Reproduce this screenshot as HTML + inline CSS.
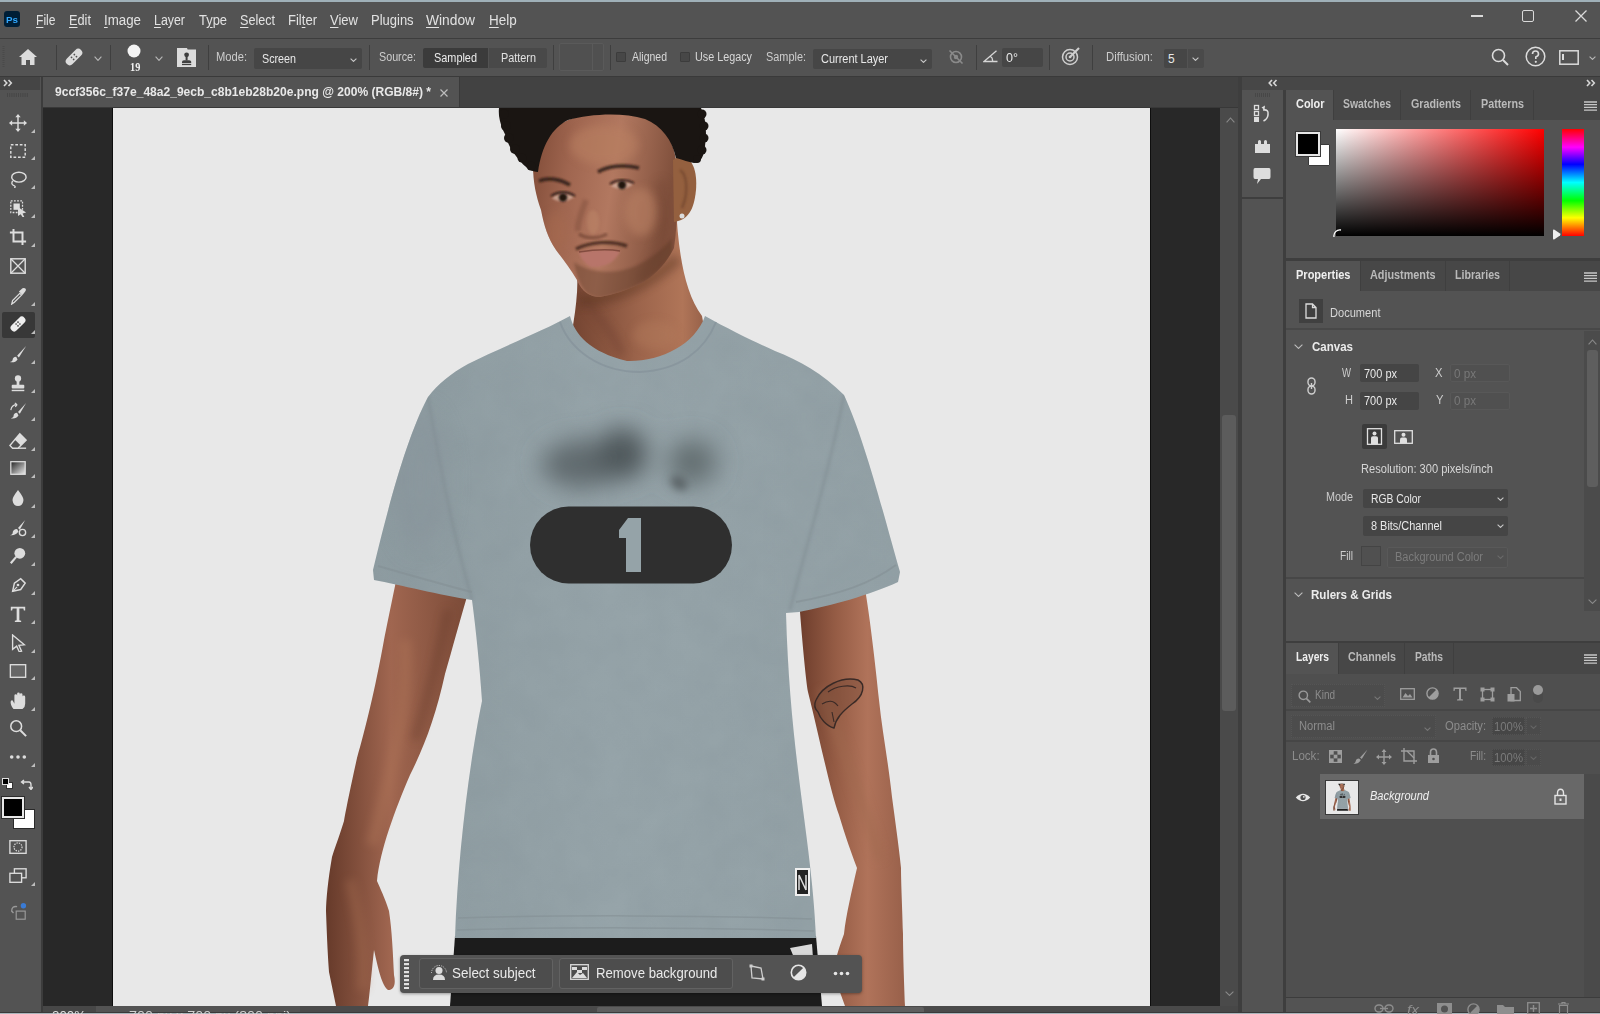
<!DOCTYPE html>
<html><head><meta charset="utf-8">
<style>
*{margin:0;padding:0;box-sizing:border-box}
html,body{width:1600px;height:1014px;overflow:hidden;background:#535353;font-family:"Liberation Sans",sans-serif;color:#e0e0e0}
.a{position:absolute}
.t{position:absolute;white-space:nowrap;line-height:1}
u{text-decoration:underline;text-underline-offset:2px;text-decoration-thickness:1px}
</style></head><body>
<div class="a" style="left:0px;top:0px;width:1600px;height:2px;background:#9fb0b8;"></div>
<div class="a" style="left:0px;top:2px;width:1600px;height:36px;background:#535353;"></div>
<div class="a" style="left:0px;top:38px;width:1600px;height:1px;background:#3d3d3d;"></div>
<div class="a" style="left:0px;top:39px;width:1600px;height:37px;background:#535353;"></div>
<div class="a" style="left:0px;top:76px;width:1600px;height:1px;background:#3a3a3a;"></div>
<div class="a" style="left:0px;top:77px;width:41px;height:929px;background:#535353;"></div>
<div class="a" style="left:0px;top:77px;width:40px;height:13px;background:#454545;"></div>
<div class="a" style="left:41px;top:77px;width:2px;height:937px;background:#3c3c3c;"></div>
<div class="a" style="left:43px;top:77px;width:1195px;height:31px;background:#424242;"></div>
<div class="a" style="left:43px;top:77px;width:416px;height:30px;background:#535353;"></div>
<div class="a" style="left:459px;top:77px;width:1px;height:30px;background:#3a3a3a;"></div>
<div class="a" style="left:43px;top:107px;width:1195px;height:1px;background:#383838;"></div>
<div class="a" style="left:43px;top:108px;width:1177px;height:898px;background:#282828;"></div>
<div class="a" style="left:112px;top:108px;width:1px;height:898px;background:#0e0e0e;"></div>
<div class="a" style="left:1150px;top:108px;width:1px;height:898px;background:#0e0e0e;"></div>
<div class="a" style="left:113px;top:108px;width:1037px;height:898px;background:#e8e8e8;"></div>
<svg class="a" style="left:113px;top:108px" width="1037" height="898" viewBox="113 108 1037 898">
<defs>
<filter id="bl12" filterUnits="userSpaceOnUse" x="113" y="108" width="1037" height="898"><feGaussianBlur stdDeviation="12"/></filter>
<filter id="bl4" filterUnits="userSpaceOnUse" x="113" y="108" width="1037" height="898"><feGaussianBlur stdDeviation="4"/></filter>
<filter id="bl2" x="-50%" y="-50%" width="200%" height="200%"><feGaussianBlur stdDeviation="1.5"/></filter>
<filter id="bl1" x="-50%" y="-50%" width="200%" height="200%"><feGaussianBlur stdDeviation="0.8"/></filter>
<linearGradient id="armL" x1="0" y1="0" x2="1" y2="0"><stop offset="0" stop-color="#663a2a"/><stop offset="0.45" stop-color="#a06650"/><stop offset="1" stop-color="#7a4a37"/></linearGradient>
<linearGradient id="armR" x1="0" y1="0" x2="1" y2="0"><stop offset="0" stop-color="#6c3c2b"/><stop offset="0.35" stop-color="#955c45"/><stop offset="0.65" stop-color="#b0735a"/><stop offset="1" stop-color="#98604a"/></linearGradient>
<linearGradient id="skinF" x1="0" y1="0" x2="1" y2="0.2"><stop offset="0" stop-color="#7e4a36"/><stop offset="0.3" stop-color="#a06650"/><stop offset="0.6" stop-color="#b27860"/><stop offset="1" stop-color="#80503c"/></linearGradient>
<linearGradient id="neckG" x1="0" y1="0" x2="1" y2="0"><stop offset="0" stop-color="#70412f"/><stop offset="0.5" stop-color="#9c644b"/><stop offset="0.8" stop-color="#b07558"/><stop offset="1" stop-color="#8e5a44"/></linearGradient>
<linearGradient id="shirtG" x1="0" y1="0" x2="1" y2="0"><stop offset="0" stop-color="#8e9ca1"/><stop offset="0.45" stop-color="#97a5aa"/><stop offset="1" stop-color="#94a2a7"/></linearGradient>
<clipPath id="faceclip"><path d="M533,165 C536,132 565,113 612,112 C652,112 672,130 676,160 C678,190 678,222 674,248 C666,264 654,276 642,283 C628,290 612,295 600,297 C590,297 582,292 577,280 C570,268 562,258 556,250 C548,238 544,226 541,210 C536,196 533,182 533,165 Z"/></clipPath>
<clipPath id="shirtclip"><path d="M570,316 C575,335 590,352 627,361 C660,362 695,345 705,316 C730,330 755,342 775,351 C800,361 822,373 844,395 C865,440 885,520 900,572 L898,582 C870,595 830,606 799,612 L786,613 C790,760 812,840 816,938 L455,938 C458,850 470,760 482,701 C480,670 476,630 472,600 C440,595 400,585 374,580 L373,570 C385,520 405,440 428,397 C438,384 450,374 468,364 C500,348 545,330 570,316 Z"/></clipPath>
<filter id="noise" x="0" y="0" width="100%" height="100%"><feTurbulence type="fractalNoise" baseFrequency="0.03" numOctaves="3" seed="3"/><feColorMatrix type="matrix" values="0 0 0 0 0.2  0 0 0 0 0.25  0 0 0 0 0.28  0 0 0 -1.2 1.1"/></filter>
<clipPath id="neckclip"><path d="M574,255 L676,205 C678,250 684,292 702,316 L712,372 L565,372 C572,330 579,300 577,272 Z"/></clipPath>
</defs>
<g id="fig">
<!-- left arm -->
<path d="M398,570 L395,586 C390,610 386,630 384,640 C375,690 365,730 357,758 C350,790 347,805 344,821 C338,840 334,850 332,857 C328,880 326,900 326,911 C327,940 328,960 329,972 L336,1006 L368,1006 C370,990 372,968 374,950 C378,968 382,986 388,990 C394,990 396,984 394,975 C393,955 392,930 389,911 C385,898 380,888 377,881 C380,850 395,810 410,775 C425,745 436,715 445,674 C452,650 460,620 466,600 L470,580 Z" fill="url(#armL)"/>
<path d="M405,640 C410,700 395,760 372,845" stroke="#ad7356" stroke-width="12" fill="none" opacity="0.45" filter="url(#bl4)"/>
<path d="M350,880 C360,920 365,950 362,990" stroke="#a46c50" stroke-width="10" fill="none" opacity="0.4" filter="url(#bl4)"/>
<path d="M448,610 C440,650 430,690 415,740" stroke="#5e3626" stroke-width="8" fill="none" opacity="0.35" filter="url(#bl4)"/>
<!-- right arm -->
<path d="M798,590 L800,612 C803,650 806,680 808,692 C820,740 830,790 839,815 C845,835 852,855 857,868 C852,890 846,915 844,934 C838,950 834,965 833,973 L845,1006 L905,1006 C904,980 903,950 903,934 C902,900 901,880 901,868 C898,840 895,820 892,797 C888,760 882,730 879,700 C875,660 870,620 866,595 L864,575 Z" fill="url(#armR)"/>
<path d="M822,690 C835,730 860,790 880,860" stroke="#a06a50" stroke-width="10" fill="none" opacity="0.5" filter="url(#bl4)"/>
<!-- tattoo -->
<path d="M816,700 C822,686 842,676 858,680 C866,684 864,696 852,704 C842,712 836,718 834,728 C826,726 820,718 818,712 C814,708 814,704 816,700 Z" fill="#6a4232" fill-opacity="0.35" stroke="#3a2a26" stroke-width="1.4"/>
<path d="M828,692 C836,686 850,684 856,688 M822,704 C828,700 834,700 838,706 M832,712 L834,722" stroke="#3a2a26" stroke-width="1.1" fill="none"/>
<!-- pants -->
<path d="M455,936 L816,936 L822,1006 L450,1006 Z" fill="#1c1c1c"/>
<path d="M790,948 L812,944 L813,958 L795,960 Z" fill="#d8d8d8"/>
<!-- neck -->
<path d="M574,255 L676,205 C678,250 684,292 702,316 L712,372 L565,372 C572,330 579,300 577,272 Z" fill="url(#neckG)"/>
<g clip-path="url(#neckclip)">
<path d="M585,300 C600,320 615,335 622,355" stroke="#6e4030" stroke-width="8" fill="none" opacity="0.45" filter="url(#bl4)"/>
<ellipse cx="655" cy="335" rx="22" ry="14" fill="#b27a5c" opacity="0.45" filter="url(#bl4)"/>
<path d="M578,300 C610,302 650,285 678,258" stroke="#5a3424" stroke-width="12" fill="none" opacity="0.45" filter="url(#bl4)"/>
</g>
<!-- face -->
<path d="M533,165 C536,132 565,113 612,112 C652,112 672,130 676,160 C678,190 678,222 674,248 C666,264 654,276 642,283 C628,290 612,295 600,297 C590,297 582,292 577,280 C570,268 562,258 556,250 C548,238 544,226 541,210 C536,196 533,182 533,165 Z" fill="url(#skinF)"/>
<g clip-path="url(#faceclip)">
<ellipse cx="604" cy="145" rx="34" ry="20" fill="#b98062" opacity="0.6" filter="url(#bl4)"/>
<ellipse cx="641" cy="212" rx="16" ry="24" fill="#bd8466" opacity="0.55" filter="url(#bl4)"/>
<ellipse cx="556" cy="232" rx="12" ry="20" fill="#a66b4f" opacity="0.5" filter="url(#bl4)"/>
<path d="M660,180 C668,215 664,250 640,280" stroke="#6e4232" stroke-width="9" fill="none" opacity="0.35" filter="url(#bl4)"/>
<!-- beard / chin shadow -->
<path d="M574,262 C588,272 612,276 636,266 C652,258 664,248 672,238 L672,254 C660,272 640,290 600,298 C586,298 578,286 574,262 Z" fill="#553424" opacity="0.38" filter="url(#bl2)"/>
<!-- eyebrows -->
<path d="M539,181 C548,177 560,179 570,185" stroke="#2a1a14" stroke-width="3.5" fill="none" opacity="0.85" filter="url(#bl1)"/>
<path d="M598,172 C608,166 624,164 639,168" stroke="#2a1a14" stroke-width="3.5" fill="none" opacity="0.85" filter="url(#bl1)"/>
<!-- eyes -->
<path d="M552,198 C557,192 568,192 574,197 C568,202 558,203 552,198 Z" fill="#d9b8a8" opacity="0.7" filter="url(#bl1)"/>
<circle cx="563" cy="197.5" r="4.2" fill="#201410" filter="url(#bl1)"/>
<path d="M551,196 C558,191 568,191 575,196" stroke="#2a1a14" stroke-width="1.8" fill="none" filter="url(#bl1)"/>
<path d="M611,186 C616,180 627,180 633,184 C627,190 617,190 611,186 Z" fill="#d9b8a8" opacity="0.7" filter="url(#bl1)"/>
<circle cx="622" cy="185" r="4.2" fill="#201410" filter="url(#bl1)"/>
<path d="M610,184 C617,179 627,179 634,183" stroke="#2a1a14" stroke-width="1.8" fill="none" filter="url(#bl1)"/>
<!-- nose -->
<path d="M586,200 C582,212 577,222 578,231" stroke="#6a3e2e" stroke-width="6" fill="none" opacity="0.3" filter="url(#bl2)"/><path d="M579,234 C586,239 598,239 607,234" stroke="#5e3628" stroke-width="3.5" fill="none" opacity="0.5" filter="url(#bl1)"/>
<ellipse cx="593" cy="222" rx="6" ry="12" fill="#c08a6c" opacity="0.45" filter="url(#bl2)"/>
<!-- mustache and lips -->
<path d="M576,249 C590,242 610,240 627,246" stroke="#3a2218" stroke-width="3.5" fill="none" opacity="0.8" filter="url(#bl1)"/>
<path d="M579,252 C592,250 608,249 620,251 C616,262 604,268 591,267 C584,263 580,257 579,252 Z" fill="#b8756a" filter="url(#bl1)"/>
<path d="M579,252 C592,250 608,249 620,251" stroke="#6e3a30" stroke-width="1.5" fill="none" opacity="0.7"/>
</g>
<!-- ear -->
<path d="M673,160 C688,150 698,165 696,190 C694,210 688,220 674,222 Z" fill="#94603f"/>
<path d="M680,170 C688,175 688,195 682,208" stroke="#6a402c" stroke-width="2.5" fill="none" opacity="0.6" filter="url(#bl1)"/>
<circle cx="682" cy="216" r="2.5" fill="#ddd"/>
<!-- hair -->
<path d="M499,108 L701,108 C706,118 707,132 705,146 C704,156 701,163 694,163 C688,162 684,160 676,158 C672,140 662,126 645,119 C622,112 590,114 568,120 C552,128 542,145 538,172 C532,172 526,168 521,162 C514,154 508,146 506,136 C501,127 498,117 499,108 Z" fill="#1a1512"/>
<g fill="#1a1512"><circle cx="504" cy="114" r="5"/><circle cx="506" cy="126" r="5"/><circle cx="509" cy="138" r="5"/><circle cx="515" cy="149" r="5"/><circle cx="522" cy="158" r="4.5"/><circle cx="531" cy="166" r="4.5"/><circle cx="702" cy="114" r="4.5"/><circle cx="704" cy="126" r="4.5"/><circle cx="704" cy="138" r="4.5"/><circle cx="702" cy="150" r="4.5"/><circle cx="697" cy="159" r="4"/></g>
<!-- shirt -->
<path d="M570,316 C575,335 590,352 627,361 C660,362 695,345 705,316 C730,330 755,342 775,351 C800,361 822,373 844,395 C865,440 885,520 900,572 L898,582 C870,595 830,606 799,612 L786,613 C790,760 812,840 816,938 L455,938 C458,850 470,760 482,701 C480,670 476,630 472,600 C440,595 400,585 374,580 L373,570 C385,520 405,440 428,397 C438,384 450,374 468,364 C500,348 545,330 570,316 Z" fill="url(#shirtG)"/>
<g clip-path="url(#shirtclip)">
<rect x="360" y="310" width="560" height="640" filter="url(#noise)" opacity="0.18"/>
<path d="M428,397 C440,470 455,540 472,600" stroke="#7f8b91" stroke-width="3" fill="none" opacity="0.5" filter="url(#bl2)"/>
<path d="M844,395 C830,470 805,550 790,610" stroke="#7f8b91" stroke-width="3" fill="none" opacity="0.5" filter="url(#bl2)"/>
<ellipse cx="420" cy="480" rx="25" ry="70" fill="#87939a" opacity="0.5" filter="url(#bl12)"/>
</g>
<path d="M560,322 C570,350 600,372 640,372 C680,370 705,350 716,322" stroke="#85929a" stroke-width="2" fill="none" opacity="0.7"/>
<path d="M378,566 C420,578 455,588 472,592" stroke="#838f95" stroke-width="2" fill="none" opacity="0.6"/>
<path d="M796,602 C840,594 870,584 896,565" stroke="#838f95" stroke-width="2" fill="none" opacity="0.6"/>
<path d="M458,918 C560,915 700,915 812,919" stroke="#838f95" stroke-width="1.5" fill="none" opacity="0.6"/><path d="M457,930 C560,927 700,927 814,931" stroke="#838f95" stroke-width="1.5" fill="none" opacity="0.6"/>
<!-- smudge -->
<g filter="url(#bl12)">
<ellipse cx="582" cy="464" rx="40" ry="24" fill="#616a6e"/>
<ellipse cx="622" cy="454" rx="26" ry="26" fill="#50585b"/>
<ellipse cx="692" cy="462" rx="24" ry="23" fill="#646e71"/>
<ellipse cx="660" cy="452" rx="8" ry="9" fill="#8f9ca0" opacity="0.8"/>
</g>
<ellipse cx="679" cy="483" rx="9" ry="6" fill="#586063" filter="url(#bl4)" transform="rotate(35 679 483)"/>
<!-- pill -->
<rect x="530" y="506.5" width="202" height="77" rx="38.5" fill="#2f2f2f"/>
<polygon points="619,530 628,518 641,518 641,572 626,572 626,538 619,538" fill="#95a3a8"/>
<!-- tag -->
<rect x="795" y="868" width="15" height="28" fill="#f0f0f0"/>
<rect x="797" y="870" width="11" height="24" fill="#222"/>
<path d="M799,875 L799,890 M799,875 L806,890 M806,875 L806,890" stroke="#ddd" stroke-width="1.5"/>
</g>
</svg>
<div class="a" style="left:1220px;top:108px;width:18px;height:898px;background:#4a4a4a;"></div>
<div class="a" style="left:1238px;top:77px;width:4px;height:937px;background:#3e3e3e;"></div>
<div class="a" style="left:43px;top:1006px;width:1195px;height:6px;background:#474747;"></div>
<div class="a" style="left:1242px;top:77px;width:358px;height:13px;background:#474747;"></div>
<div class="a" style="left:1242px;top:90px;width:41px;height:107px;background:#535353;"></div>
<div class="a" style="left:1242px;top:197px;width:41px;height:2px;background:#3e3e3e;"></div>
<div class="a" style="left:1242px;top:199px;width:41px;height:813px;background:#535353;"></div>
<div class="a" style="left:1283px;top:90px;width:3px;height:924px;background:#3e3e3e;"></div>
<div class="a" style="left:1286px;top:90px;width:314px;height:30px;background:#474747;"></div>
<div class="a" style="left:1286px;top:90px;width:47px;height:30px;background:#535353;"></div>
<div class="a" style="left:1286px;top:120px;width:314px;height:138px;background:#535353;"></div>
<div class="a" style="left:1286px;top:258px;width:314px;height:3px;background:#3e3e3e;"></div>
<div class="a" style="left:1286px;top:261px;width:314px;height:30px;background:#474747;"></div>
<div class="a" style="left:1286px;top:261px;width:74px;height:30px;background:#535353;"></div>
<div class="a" style="left:1286px;top:291px;width:314px;height:350px;background:#535353;"></div>
<div class="a" style="left:1286px;top:641px;width:314px;height:2px;background:#3e3e3e;"></div>
<div class="a" style="left:1286px;top:643px;width:314px;height:31px;background:#474747;"></div>
<div class="a" style="left:1286px;top:643px;width:52px;height:31px;background:#535353;"></div>
<div class="a" style="left:1286px;top:674px;width:314px;height:338px;background:#4f4f4f;"></div>
<div class="a" style="left:0px;top:1012px;width:1600px;height:1px;background:#3a3a3a;"></div>
<div class="a" style="left:0px;top:1013px;width:1600px;height:1px;background:#a9b5bb;"></div>
<div class="a" style="left:4px;top:11px;width:16px;height:16px;background:#001e36;border-radius:3px"></div>
<div class="t" style="left:5.5px;top:14.96px;font-size:9.5px;color:#31a8ff;font-weight:bold;font-style:normal;transform:scaleX(1.0323);transform-origin:0 0;">Ps</div>
<div class="t" style="left:36px;top:12.85px;font-size:14px;color:#e2e2e2;font-weight:normal;font-style:normal;transform:scaleX(0.8637);transform-origin:0 0;"><u>F</u>ile</div>
<div class="t" style="left:68.5px;top:12.85px;font-size:14px;color:#e2e2e2;font-weight:normal;font-style:normal;transform:scaleX(0.9113);transform-origin:0 0;"><u>E</u>dit</div>
<div class="t" style="left:104px;top:12.85px;font-size:14px;color:#e2e2e2;font-weight:normal;font-style:normal;transform:scaleX(0.9506);transform-origin:0 0;"><u>I</u>mage</div>
<div class="t" style="left:154px;top:12.85px;font-size:14px;color:#e2e2e2;font-weight:normal;font-style:normal;transform:scaleX(0.8849);transform-origin:0 0;"><u>L</u>ayer</div>
<div class="t" style="left:199px;top:12.85px;font-size:14px;color:#e2e2e2;font-weight:normal;font-style:normal;transform:scaleX(0.9223);transform-origin:0 0;">T<u>y</u>pe</div>
<div class="t" style="left:240px;top:12.85px;font-size:14px;color:#e2e2e2;font-weight:normal;font-style:normal;transform:scaleX(0.8992);transform-origin:0 0;"><u>S</u>elect</div>
<div class="t" style="left:288px;top:12.85px;font-size:14px;color:#e2e2e2;font-weight:normal;font-style:normal;transform:scaleX(0.9317);transform-origin:0 0;">Fil<u>t</u>er</div>
<div class="t" style="left:330px;top:12.85px;font-size:14px;color:#e2e2e2;font-weight:normal;font-style:normal;transform:scaleX(0.9299);transform-origin:0 0;"><u>V</u>iew</div>
<div class="t" style="left:371px;top:12.85px;font-size:14px;color:#e2e2e2;font-weight:normal;font-style:normal;transform:scaleX(0.9277);transform-origin:0 0;">Plugins</div>
<div class="t" style="left:426px;top:12.85px;font-size:14px;color:#e2e2e2;font-weight:normal;font-style:normal;transform:scaleX(0.9837);transform-origin:0 0;"><u>W</u>indow</div>
<div class="t" style="left:488.6px;top:12.85px;font-size:14px;color:#e2e2e2;font-weight:normal;font-style:normal;transform:scaleX(0.9614);transform-origin:0 0;"><u>H</u>elp</div>
<div class="a" style="left:1471px;top:15px;width:12px;height:2px;background:#dadada;"></div>
<div class="a" style="left:1522px;top:10px;width:12px;height:12px;background:transparent;border:1.7px solid #dadada;border-radius:2px"></div>
<svg class="a" style="left:1574px;top:9px;" width="14" height="14" viewBox="0 0 14 14"><path d="M1.5,1.5 L12.5,12.5 M12.5,1.5 L1.5,12.5" stroke="#dadada" stroke-width="1.3"/></svg>
<svg class="a" style="left:2px;top:46px;" width="3" height="22" viewBox="0 0 3 22"><path d="M1.5,0 V22" stroke="#4a4a4a" stroke-width="2" stroke-dasharray="1 1"/></svg>
<svg class="a" style="left:19px;top:49px;" width="18" height="16" viewBox="0 0 18 16"><path d="M9,0 L18,8 L15.5,8 L15.5,16 L11,16 L11,11 L7,11 L7,16 L2.5,16 L2.5,8 L0,8 Z" fill="#dcdcdc"/></svg>
<div class="a" style="left:56px;top:45px;width:1px;height:25px;background:#3f3f3f;"></div>
<svg class="a" style="left:65px;top:48px;" width="18" height="18" viewBox="0 0 18 18"><g transform="rotate(-45 9 9)"><rect x="-1" y="5" width="20" height="8" rx="4" fill="#dcdcdc"/><circle cx="7" cy="7.5" r="0.9" fill="#535353"/><circle cx="11" cy="7.5" r="0.9" fill="#535353"/><circle cx="7" cy="10.5" r="0.9" fill="#535353"/><circle cx="11" cy="10.5" r="0.9" fill="#535353"/></g></svg>
<svg class="a" style="left:94px;top:56px;" width="8" height="5" viewBox="0 0 8 5"><path d="M0.6,0.6 L4.0,4.4 L7.4,0.6" stroke="#b8b8b8" stroke-width="1.1" fill="none"/></svg>
<div class="a" style="left:110px;top:45px;width:1px;height:25px;background:#3f3f3f;"></div>
<svg class="a" style="left:127px;top:44px;" width="14" height="14" viewBox="0 0 14 14"><circle cx="7" cy="7" r="6.5" fill="#f4f4f4"/></svg>
<div class="t" style="left:129.5px;top:61.42px;font-size:12.5px;color:#f0f0f0;font-weight:bold;font-style:normal;transform:scaleX(0.8270);transform-origin:0 0;font-family:'Liberation Serif',serif">19</div>
<svg class="a" style="left:155px;top:56px;" width="8" height="5" viewBox="0 0 8 5"><path d="M0.6,0.6 L4.0,4.4 L7.4,0.6" stroke="#b8b8b8" stroke-width="1.1" fill="none"/></svg>
<svg class="a" style="left:177px;top:47px;" width="19" height="20" viewBox="0 0 19 20"><path d="M0,1 H10 L10.6,2.5 H19 V20 H0 Z" fill="#dcdcdc"/><circle cx="9.6" cy="7.8" r="2.4" fill="#3f3f3f"/><rect x="8.6" y="9" width="2" height="4.5" fill="#3f3f3f"/><path d="M5,16 V14.8 Q5,13.2 7,13.2 H12.2 Q14.2,13.2 14.2,14.8 V16 Z" fill="#3f3f3f"/><rect x="5" y="16.8" width="9.2" height="1.3" fill="#3f3f3f"/></svg>
<div class="a" style="left:208px;top:45px;width:1px;height:25px;background:#3f3f3f;"></div>
<div class="t" style="left:216px;top:51.34px;font-size:12px;color:#cdcdcd;font-weight:normal;font-style:normal;transform:scaleX(0.9293);transform-origin:0 0;">Mode:</div>
<div class="a" style="left:254px;top:48px;width:108px;height:21px;background:#464646;border-radius:2px"></div>
<div class="t" style="left:262px;top:52.84px;font-size:12px;color:#e8e8e8;font-weight:normal;font-style:normal;transform:scaleX(0.8940);transform-origin:0 0;">Screen</div>
<svg class="a" style="left:350px;top:58px;" width="7" height="4" viewBox="0 0 7 4"><path d="M0.6,0.6 L3.5,3.4 L6.4,0.6" stroke="#c8c8c8" stroke-width="1.1" fill="none"/></svg>
<div class="a" style="left:369px;top:45px;width:1px;height:25px;background:#3f3f3f;"></div>
<div class="t" style="left:379px;top:51.34px;font-size:12px;color:#cdcdcd;font-weight:normal;font-style:normal;transform:scaleX(0.8946);transform-origin:0 0;">Source:</div>
<div class="a" style="left:423px;top:48px;width:65px;height:20px;background:#3b3b3b;border-radius:2px 0 0 2px"></div>
<div class="t" style="left:434px;top:52.14px;font-size:12px;color:#ececec;font-weight:normal;font-style:normal;transform:scaleX(0.9077);transform-origin:0 0;">Sampled</div>
<div class="a" style="left:489px;top:48px;width:58px;height:20px;background:#494949;border-radius:0 2px 2px 0"></div>
<div class="t" style="left:501px;top:52.14px;font-size:12px;color:#e2e2e2;font-weight:normal;font-style:normal;transform:scaleX(0.9043);transform-origin:0 0;">Pattern</div>
<div class="a" style="left:553px;top:45px;width:1px;height:25px;background:#3f3f3f;"></div>
<div class="a" style="left:559px;top:43px;width:45px;height:28px;background:#505050;border:1px solid #5a5a5a;border-radius:2px"></div>
<div class="a" style="left:592px;top:44px;width:1px;height:26px;background:#5a5a5a;"></div>
<div class="a" style="left:610px;top:45px;width:1px;height:25px;background:#3f3f3f;"></div>
<div class="a" style="left:616px;top:52px;width:10px;height:10px;background:#474747;border:1px solid #3c3c3c;border-radius:1px"></div>
<div class="t" style="left:632px;top:51.04px;font-size:12px;color:#d8d8d8;font-weight:normal;font-style:normal;transform:scaleX(0.8743);transform-origin:0 0;">Aligned</div>
<div class="a" style="left:680px;top:52px;width:10px;height:10px;background:#474747;border:1px solid #3c3c3c;border-radius:1px"></div>
<div class="t" style="left:695px;top:51.04px;font-size:12px;color:#d8d8d8;font-weight:normal;font-style:normal;transform:scaleX(0.8994);transform-origin:0 0;">Use Legacy</div>
<div class="t" style="left:766px;top:51.04px;font-size:12px;color:#cdcdcd;font-weight:normal;font-style:normal;transform:scaleX(0.9084);transform-origin:0 0;">Sample:</div>
<div class="a" style="left:813px;top:49px;width:119px;height:20px;background:#464646;border-radius:2px"></div>
<div class="t" style="left:821px;top:52.84px;font-size:12px;color:#e8e8e8;font-weight:normal;font-style:normal;transform:scaleX(0.9131);transform-origin:0 0;">Current Layer</div>
<svg class="a" style="left:920px;top:59px;" width="7" height="4" viewBox="0 0 7 4"><path d="M0.6,0.6 L3.5,3.4 L6.4,0.6" stroke="#c8c8c8" stroke-width="1.1" fill="none"/></svg>
<svg class="a" style="left:948px;top:49px;" width="16" height="16" viewBox="0 0 16 16"><circle cx="8" cy="8" r="5.5" stroke="#8a8a8a" stroke-width="1.6" fill="none"/><circle cx="8" cy="8" r="2.2" fill="#8a8a8a"/><path d="M1.5,1.5 L14.5,14.5" stroke="#8a8a8a" stroke-width="1.6"/></svg>
<div class="a" style="left:976px;top:45px;width:1px;height:25px;background:#3f3f3f;"></div>
<svg class="a" style="left:983px;top:50px;" width="15" height="13" viewBox="0 0 15 13"><path d="M13.5,0.8 L1,11.5 L14.5,11.5 M7.5,6.5 Q10,8 9.5,11.5" stroke="#d6d6d6" stroke-width="1.3" fill="none"/></svg>
<div class="a" style="left:1002px;top:48px;width:41px;height:19px;background:#464646;border-radius:2px"></div>
<div class="t" style="left:1006px;top:51.84px;font-size:12px;color:#e8e8e8;font-weight:normal;font-style:normal;transform:scaleX(1.0449);transform-origin:0 0;">0°</div>
<div class="a" style="left:1049px;top:45px;width:1px;height:25px;background:#3f3f3f;"></div>
<svg class="a" style="left:1061px;top:46px;" width="20" height="20" viewBox="0 0 20 20"><circle cx="9" cy="11" r="7.5" stroke="#cfcfcf" stroke-width="1.5" fill="none"/><circle cx="9" cy="11" r="4" stroke="#cfcfcf" stroke-width="1.5" fill="none"/><circle cx="9" cy="11" r="1.3" fill="#cfcfcf"/><path d="M9,11 L18,2" stroke="#cfcfcf" stroke-width="2.2"/></svg>
<div class="a" style="left:1092px;top:45px;width:1px;height:25px;background:#3f3f3f;"></div>
<div class="t" style="left:1106px;top:51.04px;font-size:12px;color:#cdcdcd;font-weight:normal;font-style:normal;transform:scaleX(0.9435);transform-origin:0 0;">Diffusion:</div>
<div class="a" style="left:1164px;top:49px;width:23px;height:19px;background:#464646;border-radius:2px 0 0 2px"></div>
<div class="t" style="left:1168px;top:52.84px;font-size:12px;color:#e8e8e8;font-weight:normal;font-style:normal;">5</div>
<div class="a" style="left:1188px;top:49px;width:16px;height:19px;background:#4a4a4a;border-radius:0 2px 2px 0"></div>
<svg class="a" style="left:1192px;top:57px;" width="7" height="4" viewBox="0 0 7 4"><path d="M0.6,0.6 L3.5,3.4 L6.4,0.6" stroke="#c8c8c8" stroke-width="1.1" fill="none"/></svg>
<svg class="a" style="left:1491px;top:48px;" width="18" height="18" viewBox="0 0 18 18"><circle cx="7.5" cy="7.5" r="6" stroke="#dcdcdc" stroke-width="1.6" fill="none"/><path d="M12,12 L17,17" stroke="#dcdcdc" stroke-width="2"/></svg>
<svg class="a" style="left:1525px;top:46px;" width="21" height="21" viewBox="0 0 21 21"><circle cx="10.5" cy="10.5" r="9.3" stroke="#dcdcdc" stroke-width="1.5" fill="none"/><path d="M7.5,8 Q7.5,5 10.5,5 Q13.5,5 13.5,8 Q13.5,10 10.8,11 L10.8,13" stroke="#dcdcdc" stroke-width="1.6" fill="none"/><circle cx="10.8" cy="15.8" r="1.1" fill="#dcdcdc"/></svg>
<svg class="a" style="left:1559px;top:50px;" width="20" height="15" viewBox="0 0 20 15"><rect x="0.8" y="0.8" width="18.4" height="13.4" stroke="#dcdcdc" stroke-width="1.5" fill="none"/><rect x="3" y="4" width="2" height="6" fill="#dcdcdc"/></svg>
<svg class="a" style="left:1589px;top:56px;" width="7" height="4" viewBox="0 0 7 4"><path d="M0.6,0.6 L3.5,3.4 L6.4,0.6" stroke="#b8b8b8" stroke-width="1.1" fill="none"/></svg>
<div class="t" style="left:54.5px;top:86.04px;font-size:12px;color:#e8e8e8;font-weight:bold;font-style:normal;transform:scaleX(1.0038);transform-origin:0 0;">9ccf356c_f37e_48a2_9ecb_c8b1eb28b20e.png @ 200% (RGB/8#) *</div>
<svg class="a" style="left:440px;top:89px;" width="8" height="8" viewBox="0 0 8 8"><path d="M0.5,0.5 L7.5,7.5 M7.5,0.5 L0.5,7.5" stroke="#bdbdbd" stroke-width="1.2"/></svg>
<svg class="a" style="left:3px;top:79px;" width="10" height="8" viewBox="0 0 10 8"><path d="M1,1 L3.8,4 L1,7 M5.5,1 L8.3,4 L5.5,7" stroke="#d6d6d6" stroke-width="1.6" fill="none"/></svg>
<svg class="a" style="left:7px;top:93px;" width="21" height="4" viewBox="0 0 21 4"><path d="M0,2 H21" stroke="#474747" stroke-width="4" stroke-dasharray="1 1.2"/></svg>
<div class="a" style="left:2px;top:312px;width:33px;height:26px;background:#383838;border-radius:2px"></div>
<svg class="a" style="left:9px;top:114px;" width="18" height="18" viewBox="0 0 20 20"><path d="M10,1 V19 M1,10 H19" stroke="#ddd" stroke-width="1.6"/><path d="M10,0 L7,3.5 H13 Z M10,20 L7,16.5 H13 Z M0,10 L3.5,7 V13 Z M20,10 L16.5,7 V13 Z" fill="#ddd"/></svg>
<svg class="a" style="left:9px;top:142px;" width="18" height="18" viewBox="0 0 20 20"><rect x="2" y="3" width="16" height="14" stroke="#ddd" stroke-width="1.6" fill="none" stroke-dasharray="3 2"/></svg>
<svg class="a" style="left:9px;top:170px;" width="18" height="18" viewBox="0 0 20 20"><ellipse cx="11" cy="8" rx="8" ry="5.5" stroke="#ddd" stroke-width="1.6" fill="none"/><path d="M4,12 Q2,16 5,17 Q8,18 6,20" stroke="#ddd" stroke-width="1.5" fill="none"/></svg>
<svg class="a" style="left:9px;top:199px;" width="18" height="18" viewBox="0 0 20 20"><rect x="2" y="2" width="13" height="13" stroke="#ddd" stroke-width="1.4" fill="none" stroke-dasharray="2 1.5"/><rect x="5" y="5" width="7" height="7" fill="#ddd"/><path d="M10,9 L19,15 L15,16 L17,20 L15,20 L13,17 L10,19 Z" fill="#ddd"/></svg>
<svg class="a" style="left:9px;top:228px;" width="18" height="18" viewBox="0 0 20 20"><path d="M5,1 V15 H19 M1,5 H15 V19" stroke="#ddd" stroke-width="2.2" fill="none"/></svg>
<svg class="a" style="left:9px;top:257px;" width="18" height="18" viewBox="0 0 20 20"><rect x="2" y="2" width="16" height="16" stroke="#ddd" stroke-width="1.6" fill="none"/><path d="M2,2 L18,18 M18,2 L2,18" stroke="#ddd" stroke-width="1.4"/></svg>
<svg class="a" style="left:9px;top:287px;" width="18" height="18" viewBox="0 0 20 20"><path d="M3,19 L4,15 L12,7 L14,9 L6,17 Z" stroke="#ddd" stroke-width="1.4" fill="none"/><path d="M11,5 L15,1.5 Q17,0.5 18.5,2 Q19.5,3.5 18,5 L15,9 Z" fill="#ddd"/></svg>
<svg class="a" style="left:9px;top:315px;" width="18" height="18" viewBox="0 0 20 20"><g transform="rotate(-45 10 10)"><rect x="0" y="6" width="20" height="8" rx="4" fill="#eee"/><circle cx="8.5" cy="8.5" r="0.9" fill="#383838"/><circle cx="11.5" cy="8.5" r="0.9" fill="#383838"/><circle cx="8.5" cy="11.5" r="0.9" fill="#383838"/><circle cx="11.5" cy="11.5" r="0.9" fill="#383838"/></g></svg>
<svg class="a" style="left:9px;top:345px;" width="18" height="18" viewBox="0 0 20 20"><path d="M19,1 L9,12 L11,14 Z" fill="#ddd"/><path d="M8,13 Q4,13 4,17 Q3,19 1,19 Q7,20 9.5,16 Z" fill="#ddd"/></svg>
<svg class="a" style="left:9px;top:374px;" width="18" height="18" viewBox="0 0 20 20"><circle cx="10" cy="5" r="3.5" fill="#ddd"/><rect x="8.5" y="7" width="3" height="6" fill="#ddd"/><rect x="3" y="12" width="14" height="4" rx="1" fill="#ddd"/><rect x="3" y="17.5" width="14" height="1.6" fill="#ddd"/></svg>
<svg class="a" style="left:9px;top:402px;" width="18" height="18" viewBox="0 0 20 20"><path d="M19,1 L10,11 L12,13 Z" fill="#ddd"/><path d="M9,12 Q5,12 5,16 Q4,18 2,18 Q8,19 10.5,15 Z" fill="#ddd"/><path d="M2,9 Q3,3 9,3 M9,3 L6.5,1 M9,3 L7,5.5" stroke="#ddd" stroke-width="1.3" fill="none"/></svg>
<svg class="a" style="left:9px;top:432px;" width="18" height="18" viewBox="0 0 20 20"><path d="M12,2 L19,9 L10,18 L4,18 L1,15 Z" fill="none" stroke="#ddd" stroke-width="1.5"/><path d="M12,2 L19,9 L13,15 L6,8 Z" fill="#ddd"/><path d="M10,18 H19" stroke="#ddd" stroke-width="1.5"/></svg>
<svg class="a" style="left:9px;top:459px;" width="18" height="18" viewBox="0 0 20 20"><defs><linearGradient id="tg" x1="0" y1="0" x2="1" y2="1"><stop offset="0" stop-color="#222"/><stop offset="1" stop-color="#eee"/></linearGradient></defs><rect x="2" y="3" width="16" height="14" fill="url(#tg)" stroke="#ddd" stroke-width="1.4"/></svg>
<svg class="a" style="left:9px;top:489px;" width="18" height="18" viewBox="0 0 20 20"><path d="M10,1 Q17,10 16,13 Q15,19 10,19 Q5,19 4,13 Q3,10 10,1 Z" fill="#ddd"/></svg>
<svg class="a" style="left:9px;top:519px;" width="18" height="18" viewBox="0 0 20 20"><path d="M18,1 L10,10 L12,12 Z" fill="#ddd"/><path d="M9,11 Q4,11 4,16 Q3,18 1,18 Q7,19 10.5,14 Z" fill="#ddd"/><circle cx="15" cy="15" r="3.5" stroke="#ddd" stroke-width="1.5" fill="none"/></svg>
<svg class="a" style="left:9px;top:547px;" width="18" height="18" viewBox="0 0 20 20"><circle cx="12" cy="7" r="6" fill="#ddd"/><path d="M8,11 L2,18" stroke="#ddd" stroke-width="2.4"/></svg>
<svg class="a" style="left:9px;top:576px;" width="18" height="18" viewBox="0 0 20 20"><path d="M4,17 L6,8 L13,3 L18,8 L13,15 Z" stroke="#ddd" stroke-width="1.6" fill="none"/><circle cx="10" cy="10" r="1.5" fill="#ddd"/><path d="M4,17 L9,12" stroke="#ddd" stroke-width="1.2"/></svg>
<svg class="a" style="left:9px;top:605px;" width="18" height="18" viewBox="0 0 20 20"><path d="M2,2 H18 V6 H16.5 L16,4 H11.5 V17 L13.5,17.5 V19 H6.5 V17.5 L8.5,17 V4 H4 L3.5,6 H2 Z" fill="#ddd"/></svg>
<svg class="a" style="left:9px;top:634px;" width="18" height="18" viewBox="0 0 20 20"><path d="M4,1 L17,12 L11,12.5 L14,19 L11.5,20 L8.5,13.5 L4,17 Z" fill="none" stroke="#ddd" stroke-width="1.5"/></svg>
<svg class="a" style="left:9px;top:662px;" width="18" height="18" viewBox="0 0 20 20"><rect x="1.5" y="3" width="17" height="14" fill="#666" stroke="#ddd" stroke-width="1.5"/></svg>
<svg class="a" style="left:9px;top:692px;" width="18" height="18" viewBox="0 0 20 20"><path d="M5,19 Q1,14 2,10 L3.5,9 Q5,11 6,13 V4 Q6,2.5 7.5,2.5 Q9,2.5 9,4 V10 V2 Q9,0.5 10.5,0.5 Q12,0.5 12,2 V10 V3 Q12,1.5 13.5,1.5 Q15,1.5 15,3 V10 V5 Q15,4 16.5,4 Q18,4 18,5.5 V13 Q18,17 15,19 Z" fill="#ddd"/></svg>
<svg class="a" style="left:9px;top:719px;" width="18" height="18" viewBox="0 0 20 20"><circle cx="8" cy="8" r="6" stroke="#ddd" stroke-width="1.7" fill="none"/><path d="M12.5,12.5 L19,19" stroke="#ddd" stroke-width="2.2"/></svg>
<svg class="a" style="left:9px;top:748px;" width="18" height="18" viewBox="0 0 20 20"><circle cx="3" cy="10" r="2" fill="#ddd"/><circle cx="10" cy="10" r="2" fill="#ddd"/><circle cx="17" cy="10" r="2" fill="#ddd"/></svg>
<svg class="a" style="left:9px;top:838px;" width="18" height="18" viewBox="0 0 20 20"><rect x="1" y="3" width="18" height="14" stroke="#ddd" stroke-width="1.5" fill="none"/><circle cx="10" cy="10" r="4.5" stroke="#ddd" stroke-width="1.3" fill="none" stroke-dasharray="1.5 1.2"/></svg>
<svg class="a" style="left:9px;top:867px;" width="18" height="18" viewBox="0 0 20 20"><rect x="6" y="2" width="13" height="10" stroke="#ddd" stroke-width="1.5" fill="#535353"/><rect x="1" y="7" width="13" height="10" stroke="#ddd" stroke-width="1.5" fill="#535353"/></svg>
<svg class="a" style="left:9px;top:903px;" width="18" height="18" viewBox="0 0 20 20"><path d="M9,4 Q3,3 3,9 L5,11" stroke="#999" stroke-width="1.5" fill="none"/><rect x="8" y="9" width="10" height="9" stroke="#999" stroke-width="1.3" fill="none"/><circle cx="16" cy="3" r="3" fill="#3a7bd5"/></svg>
<svg class="a" style="left:31px;top:129px;" width="4" height="4" viewBox="0 0 4 4"><path d="M4,0 V4 H0 Z" fill="#bdbdbd"/></svg>
<svg class="a" style="left:31px;top:156px;" width="4" height="4" viewBox="0 0 4 4"><path d="M4,0 V4 H0 Z" fill="#bdbdbd"/></svg>
<svg class="a" style="left:31px;top:185px;" width="4" height="4" viewBox="0 0 4 4"><path d="M4,0 V4 H0 Z" fill="#bdbdbd"/></svg>
<svg class="a" style="left:31px;top:214px;" width="4" height="4" viewBox="0 0 4 4"><path d="M4,0 V4 H0 Z" fill="#bdbdbd"/></svg>
<svg class="a" style="left:31px;top:243px;" width="4" height="4" viewBox="0 0 4 4"><path d="M4,0 V4 H0 Z" fill="#bdbdbd"/></svg>
<svg class="a" style="left:31px;top:302px;" width="4" height="4" viewBox="0 0 4 4"><path d="M4,0 V4 H0 Z" fill="#bdbdbd"/></svg>
<svg class="a" style="left:31px;top:330px;" width="4" height="4" viewBox="0 0 4 4"><path d="M4,0 V4 H0 Z" fill="#bdbdbd"/></svg>
<svg class="a" style="left:31px;top:360px;" width="4" height="4" viewBox="0 0 4 4"><path d="M4,0 V4 H0 Z" fill="#bdbdbd"/></svg>
<svg class="a" style="left:31px;top:389px;" width="4" height="4" viewBox="0 0 4 4"><path d="M4,0 V4 H0 Z" fill="#bdbdbd"/></svg>
<svg class="a" style="left:31px;top:417px;" width="4" height="4" viewBox="0 0 4 4"><path d="M4,0 V4 H0 Z" fill="#bdbdbd"/></svg>
<svg class="a" style="left:31px;top:447px;" width="4" height="4" viewBox="0 0 4 4"><path d="M4,0 V4 H0 Z" fill="#bdbdbd"/></svg>
<svg class="a" style="left:31px;top:474px;" width="4" height="4" viewBox="0 0 4 4"><path d="M4,0 V4 H0 Z" fill="#bdbdbd"/></svg>
<svg class="a" style="left:31px;top:504px;" width="4" height="4" viewBox="0 0 4 4"><path d="M4,0 V4 H0 Z" fill="#bdbdbd"/></svg>
<svg class="a" style="left:31px;top:534px;" width="4" height="4" viewBox="0 0 4 4"><path d="M4,0 V4 H0 Z" fill="#bdbdbd"/></svg>
<svg class="a" style="left:31px;top:562px;" width="4" height="4" viewBox="0 0 4 4"><path d="M4,0 V4 H0 Z" fill="#bdbdbd"/></svg>
<svg class="a" style="left:31px;top:591px;" width="4" height="4" viewBox="0 0 4 4"><path d="M4,0 V4 H0 Z" fill="#bdbdbd"/></svg>
<svg class="a" style="left:31px;top:620px;" width="4" height="4" viewBox="0 0 4 4"><path d="M4,0 V4 H0 Z" fill="#bdbdbd"/></svg>
<svg class="a" style="left:31px;top:649px;" width="4" height="4" viewBox="0 0 4 4"><path d="M4,0 V4 H0 Z" fill="#bdbdbd"/></svg>
<svg class="a" style="left:31px;top:676px;" width="4" height="4" viewBox="0 0 4 4"><path d="M4,0 V4 H0 Z" fill="#bdbdbd"/></svg>
<svg class="a" style="left:31px;top:707px;" width="4" height="4" viewBox="0 0 4 4"><path d="M4,0 V4 H0 Z" fill="#bdbdbd"/></svg>
<svg class="a" style="left:31px;top:763px;" width="4" height="4" viewBox="0 0 4 4"><path d="M4,0 V4 H0 Z" fill="#bdbdbd"/></svg>
<svg class="a" style="left:31px;top:882px;" width="4" height="4" viewBox="0 0 4 4"><path d="M4,0 V4 H0 Z" fill="#bdbdbd"/></svg>
<svg class="a" style="left:2px;top:778px;" width="11" height="11" viewBox="0 0 11 11"><rect x="0.5" y="0.5" width="6" height="6" fill="#000" stroke="#ddd"/><rect x="4.5" y="4.5" width="6" height="6" fill="#fff" stroke="#333"/><rect x="0.5" y="0.5" width="6" height="6" fill="#000" stroke="#ddd"/></svg>
<svg class="a" style="left:20px;top:778px;" width="13" height="12" viewBox="0 0 13 12"><path d="M2,4 H9 Q11,4 11,7 V11 M9,9 L11,11.5 L13,9 M4,2 L1.5,4 L4,6" stroke="#ddd" stroke-width="1.4" fill="none"/></svg>
<div class="a" style="left:13px;top:809px;width:22px;height:20px;background:#ffffff;border:1px solid #2a2a2a"></div>
<div class="a" style="left:2px;top:797px;width:22px;height:21px;background:#000000;border:2px solid #e8e8e8;outline:1px solid #2c2c2c"></div>
<svg class="a" style="left:1225px;top:991px;" width="9" height="5" viewBox="0 0 9 5"><path d="M0.6,0.6 L4.5,4.4 L8.4,0.6" stroke="#8a8a8a" stroke-width="1.1" fill="none"/></svg>
<svg class="a" style="left:1226px;top:117px;" width="9" height="6" viewBox="0 0 9 6"><path d="M0.6,5.4 L4.5,1 L8.4,5.4" stroke="#8a8a8a" stroke-width="1.1" fill="none"/></svg>
<div class="a" style="left:1222px;top:415px;width:14px;height:296px;background:#5c5c5c;border-radius:3px"></div>
<div class="a" style="left:96px;top:1006px;width:204px;height:6px;background:#535353;"></div>
<div class="a" style="left:300px;top:1006px;width:920px;height:6px;background:#4a4a4a;"></div>
<div class="a" style="left:597px;top:1007px;width:327px;height:5px;background:#5e5e5e;border-radius:2px 2px 0 0"></div>
<div class="t" style="left:52px;top:1010.34px;font-size:12px;color:#e0e0e0;font-weight:normal;font-style:normal;transform:scaleX(1.1074);transform-origin:0 0;">200%</div>
<div class="t" style="left:129px;top:1010.34px;font-size:12px;color:#d0d0d0;font-weight:normal;font-style:normal;transform:scaleX(1.1963);transform-origin:0 0;">700 px x 700 px (300 ppi)</div>
<svg class="a" style="left:1268px;top:79px;" width="10" height="8" viewBox="0 0 10 8"><path d="M4,1 L1.2,4 L4,7 M8.5,1 L5.7,4 L8.5,7" stroke="#d6d6d6" stroke-width="1.6" fill="none"/></svg>
<svg class="a" style="left:1586px;top:79px;" width="10" height="8" viewBox="0 0 10 8"><path d="M1,1 L3.8,4 L1,7 M5.5,1 L8.3,4 L5.5,7" stroke="#d6d6d6" stroke-width="1.6" fill="none"/></svg>
<svg class="a" style="left:1255px;top:93px;" width="16" height="4" viewBox="0 0 16 4"><path d="M0,2 H16" stroke="#474747" stroke-width="4" stroke-dasharray="1 1"/></svg>
<svg class="a" style="left:1253px;top:104px;" width="18" height="22" viewBox="0 0 18 22"><rect x="1.5" y="1.5" width="4" height="4" stroke="#ddd" stroke-width="1.3" fill="none"/><rect x="1.5" y="7.5" width="4" height="4" stroke="#ddd" stroke-width="1.3" fill="none"/><rect x="1" y="13" width="5" height="5" fill="#ddd"/><path d="M10,6 Q16,5 15,11 Q14.5,15 10.5,17" stroke="#ddd" stroke-width="1.6" fill="none"/><path d="M8.5,3.5 L12,1.5 L11.5,6 Z" fill="#ddd"/></svg>
<svg class="a" style="left:1255px;top:140px;" width="15" height="13" viewBox="0 0 15 13"><path d="M0,4 H3 V1.5 Q3,0 4.5,0 Q6,0 6,1.5 V4 H9 V1.5 Q9,0 10.5,0 Q12,0 12,1.5 V4 H15 V13 H0 Z" fill="#ddd"/></svg>
<svg class="a" style="left:1253px;top:167px;" width="18" height="20" viewBox="0 0 18 20"><path d="M2,1 H16 Q17.5,1 17.5,3 V10 Q17.5,12 16,12 H8 L4,17 L5,12 H2 Q0.5,12 0.5,10 V3 Q0.5,1 2,1 Z" fill="#ddd"/></svg>
<div class="t" style="left:1296px;top:97.54px;font-size:12px;color:#efefef;font-weight:bold;font-style:normal;transform:scaleX(0.9093);transform-origin:0 0;">Color</div>
<div class="t" style="left:1343px;top:97.54px;font-size:12px;color:#bababa;font-weight:bold;font-style:normal;transform:scaleX(0.8671);transform-origin:0 0;">Swatches</div>
<div class="t" style="left:1411px;top:97.54px;font-size:12px;color:#bababa;font-weight:bold;font-style:normal;transform:scaleX(0.8926);transform-origin:0 0;">Gradients</div>
<div class="t" style="left:1481px;top:97.54px;font-size:12px;color:#bababa;font-weight:bold;font-style:normal;transform:scaleX(0.8953);transform-origin:0 0;">Patterns</div>
<div class="a" style="left:1333px;top:90px;width:1px;height:30px;background:#3f3f3f;"></div>
<div class="a" style="left:1400px;top:90px;width:1px;height:30px;background:#3f3f3f;"></div>
<div class="a" style="left:1470px;top:90px;width:1px;height:30px;background:#3f3f3f;"></div>
<div class="a" style="left:1533px;top:90px;width:1px;height:30px;background:#3f3f3f;"></div>
<svg class="a" style="left:1584px;top:101px;" width="13" height="10" viewBox="0 0 13 10"><path d="M0,1 H13 M0,3.7 H13 M0,6.4 H13 M0,9.1 H13" stroke="#c8c8c8" stroke-width="1.3"/></svg>
<div class="a" style="left:1308px;top:144px;width:22px;height:22px;background:#ffffff;border:1px solid #3a3a3a;border-radius:1px"></div>
<div class="a" style="left:1296px;top:132px;width:24px;height:24px;background:#000000;border:2px solid #e6e6e6;outline:1px solid #3a3a3a"></div>
<div class="a" style="left:1336px;top:129px;width:208px;height:107px;background:#f00;background:linear-gradient(to top,#000,rgba(0,0,0,0)),linear-gradient(to right,#fff,#f00)"></div>
<div class="a" style="left:1562px;top:129px;width:22px;height:107px;background:#f00;background:linear-gradient(to bottom,#f00 0%,#f0f 17%,#00f 33%,#0ff 50%,#0f0 67%,#ff0 83%,#f00 100%)"></div>
<svg class="a" style="left:1333px;top:228px;" width="10" height="10" viewBox="0 0 10 10"><path d="M1,9 A6,6 0 0 1 8,2" stroke="#fff" stroke-width="1.3" fill="none"/></svg>
<svg class="a" style="left:1552px;top:229px;" width="9" height="11" viewBox="0 0 9 11"><path d="M1,1.5 Q1,0 2.5,0.8 L8,4.5 Q9,5.5 8,6.5 L2.5,10.2 Q1,11 1,9.5 Z" fill="#f0f0f0"/></svg>
<div class="t" style="left:1296px;top:268.54px;font-size:12px;color:#efefef;font-weight:bold;font-style:normal;transform:scaleX(0.9181);transform-origin:0 0;">Properties</div>
<div class="t" style="left:1370px;top:268.54px;font-size:12px;color:#bababa;font-weight:bold;font-style:normal;transform:scaleX(0.9025);transform-origin:0 0;">Adjustments</div>
<div class="t" style="left:1455px;top:268.54px;font-size:12px;color:#bababa;font-weight:bold;font-style:normal;transform:scaleX(0.8875);transform-origin:0 0;">Libraries</div>
<div class="a" style="left:1360px;top:261px;width:1px;height:30px;background:#3f3f3f;"></div>
<div class="a" style="left:1445px;top:261px;width:1px;height:30px;background:#3f3f3f;"></div>
<div class="a" style="left:1509px;top:261px;width:1px;height:30px;background:#3f3f3f;"></div>
<svg class="a" style="left:1584px;top:272px;" width="13" height="10" viewBox="0 0 13 10"><path d="M0,1 H13 M0,3.7 H13 M0,6.4 H13 M0,9.1 H13" stroke="#c8c8c8" stroke-width="1.3"/></svg>
<div class="a" style="left:1299px;top:299px;width:24px;height:24px;background:#404040;"></div>
<svg class="a" style="left:1303px;top:303px;" width="16" height="16" viewBox="0 0 16 16"><path d="M3,1 H9.5 L13,4.5 V15 H3 Z M9.5,1 V4.5 H13" stroke="#dcdcdc" stroke-width="1.3" fill="none"/></svg>
<div class="t" style="left:1330px;top:306.84px;font-size:12px;color:#d6d6d6;font-weight:normal;font-style:normal;transform:scaleX(0.9232);transform-origin:0 0;">Document</div>
<div class="a" style="left:1286px;top:328px;width:314px;height:2px;background:#484848;"></div>
<svg class="a" style="left:1294px;top:344px;" width="9" height="5" viewBox="0 0 9 5"><path d="M0.6,0.6 L4.5,4.4 L8.4,0.6" stroke="#bdbdbd" stroke-width="1.1" fill="none"/></svg>
<div class="t" style="left:1312px;top:340.84px;font-size:12px;color:#ebebeb;font-weight:bold;font-style:normal;transform:scaleX(0.9601);transform-origin:0 0;">Canvas</div>
<div class="t" style="left:1342px;top:367.24px;font-size:12px;color:#cdcdcd;font-weight:normal;font-style:normal;transform:scaleX(0.7945);transform-origin:0 0;">W</div>
<div class="a" style="left:1360px;top:364px;width:59px;height:18px;background:#454545;border-radius:2px"></div>
<div class="t" style="left:1364px;top:368.24px;font-size:12px;color:#e8e8e8;font-weight:normal;font-style:normal;transform:scaleX(0.9159);transform-origin:0 0;">700 px</div>
<div class="t" style="left:1435px;top:367.24px;font-size:12px;color:#cdcdcd;font-weight:normal;font-style:normal;transform:scaleX(0.9357);transform-origin:0 0;">X</div>
<div class="a" style="left:1450px;top:364px;width:60px;height:18px;background:#505050;border:1px solid #585858;border-radius:2px"></div>
<div class="t" style="left:1454px;top:368.24px;font-size:12px;color:#787878;font-weight:normal;font-style:normal;transform:scaleX(0.9697);transform-origin:0 0;">0 px</div>
<div class="t" style="left:1345px;top:394.34px;font-size:12px;color:#cdcdcd;font-weight:normal;font-style:normal;transform:scaleX(0.9225);transform-origin:0 0;">H</div>
<div class="a" style="left:1360px;top:392px;width:59px;height:18px;background:#454545;border-radius:2px"></div>
<div class="t" style="left:1364px;top:395.34px;font-size:12px;color:#e8e8e8;font-weight:normal;font-style:normal;transform:scaleX(0.9159);transform-origin:0 0;">700 px</div>
<div class="t" style="left:1436px;top:394.34px;font-size:12px;color:#cdcdcd;font-weight:normal;font-style:normal;transform:scaleX(0.9357);transform-origin:0 0;">Y</div>
<div class="a" style="left:1450px;top:392px;width:60px;height:18px;background:#505050;border:1px solid #585858;border-radius:2px"></div>
<div class="t" style="left:1454px;top:395.34px;font-size:12px;color:#787878;font-weight:normal;font-style:normal;transform:scaleX(0.9697);transform-origin:0 0;">0 px</div>
<svg class="a" style="left:1306px;top:377px;" width="12" height="19" viewBox="0 0 12 19"><rect x="2" y="1" width="7" height="8" rx="3.5" stroke="#cfcfcf" stroke-width="1.4" fill="none"/><rect x="2" y="9" width="7" height="8" rx="3.5" stroke="#cfcfcf" stroke-width="1.4" fill="none"/><path d="M5.5,6 V12" stroke="#cfcfcf" stroke-width="1.4"/></svg>
<div class="a" style="left:1362px;top:424px;width:25px;height:25px;background:#3b3b3b;border-radius:2px"></div>
<svg class="a" style="left:1366px;top:428px;" width="17" height="17" viewBox="0 0 17 17"><rect x="1.5" y="0.7" width="14" height="15.6" stroke="#e0e0e0" stroke-width="1.3" fill="none"/><circle cx="8.5" cy="5.5" r="2" fill="#e0e0e0"/><path d="M5,16 V10 Q5,8.3 7,8.3 H10 Q12,8.3 12,10 V16 Z" fill="#e0e0e0"/></svg>
<svg class="a" style="left:1394px;top:430px;" width="19" height="14" viewBox="0 0 19 14"><rect x="0.7" y="0.7" width="17.6" height="12.6" stroke="#e0e0e0" stroke-width="1.3" fill="none"/><circle cx="9.5" cy="4.8" r="2" fill="#e0e0e0"/><path d="M6,13 V9.5 Q6,7.5 8,7.5 H11 Q13,7.5 13,9.5 V13 Z" fill="#e0e0e0"/></svg>
<div class="t" style="left:1361px;top:463.44px;font-size:12px;color:#d6d6d6;font-weight:normal;font-style:normal;transform:scaleX(0.9246);transform-origin:0 0;">Resolution: 300 pixels/inch</div>
<div class="t" style="left:1326px;top:491.24px;font-size:12px;color:#cdcdcd;font-weight:normal;font-style:normal;transform:scaleX(0.8991);transform-origin:0 0;">Mode</div>
<div class="a" style="left:1363px;top:489px;width:145px;height:19px;background:#454545;border-radius:2px"></div>
<div class="t" style="left:1371px;top:492.84px;font-size:12px;color:#e8e8e8;font-weight:normal;font-style:normal;transform:scaleX(0.8618);transform-origin:0 0;">RGB Color</div>
<svg class="a" style="left:1497px;top:497px;" width="7" height="4" viewBox="0 0 7 4"><path d="M0.6,0.6 L3.5,3.4 L6.4,0.6" stroke="#c8c8c8" stroke-width="1.1" fill="none"/></svg>
<div class="a" style="left:1363px;top:516px;width:145px;height:20px;background:#454545;border-radius:2px"></div>
<div class="t" style="left:1371px;top:520.24px;font-size:12px;color:#e8e8e8;font-weight:normal;font-style:normal;transform:scaleX(0.9097);transform-origin:0 0;">8 Bits/Channel</div>
<svg class="a" style="left:1497px;top:524px;" width="7" height="4" viewBox="0 0 7 4"><path d="M0.6,0.6 L3.5,3.4 L6.4,0.6" stroke="#c8c8c8" stroke-width="1.1" fill="none"/></svg>
<div class="t" style="left:1340px;top:550.24px;font-size:12px;color:#cdcdcd;font-weight:normal;font-style:normal;transform:scaleX(0.8481);transform-origin:0 0;">Fill</div>
<div class="a" style="left:1361px;top:546px;width:20px;height:20px;background:#505050;border:1px solid #444"></div>
<div class="a" style="left:1387px;top:547px;width:121px;height:21px;background:#505050;border:1px solid #595959;border-radius:2px"></div>
<div class="t" style="left:1395px;top:551.04px;font-size:12px;color:#7c7c7c;font-weight:normal;font-style:normal;transform:scaleX(0.9161);transform-origin:0 0;">Background Color</div>
<svg class="a" style="left:1497px;top:555px;" width="7" height="4" viewBox="0 0 7 4"><path d="M0.6,0.6 L3.5,3.4 L6.4,0.6" stroke="#6a6a6a" stroke-width="1.1" fill="none"/></svg>
<div class="a" style="left:1286px;top:577px;width:298px;height:2px;background:#474747;"></div>
<svg class="a" style="left:1294px;top:592px;" width="9" height="5" viewBox="0 0 9 5"><path d="M0.6,0.6 L4.5,4.4 L8.4,0.6" stroke="#bdbdbd" stroke-width="1.1" fill="none"/></svg>
<div class="t" style="left:1311px;top:588.84px;font-size:12px;color:#ebebeb;font-weight:bold;font-style:normal;transform:scaleX(0.9639);transform-origin:0 0;">Rulers &amp; Grids</div>
<div class="a" style="left:1584px;top:331px;width:16px;height:280px;background:#4b4b4b;"></div>
<div class="a" style="left:1587px;top:350px;width:11px;height:137px;background:#5e5e5e;border-radius:3px"></div>
<svg class="a" style="left:1588px;top:339px;" width="9" height="6" viewBox="0 0 9 6"><path d="M0.6,5.4 L4.5,1 L8.4,5.4" stroke="#8a8a8a" stroke-width="1.1" fill="none"/></svg>
<svg class="a" style="left:1588px;top:599px;" width="9" height="5" viewBox="0 0 9 5"><path d="M0.6,0.6 L4.5,4.4 L8.4,0.6" stroke="#8a8a8a" stroke-width="1.1" fill="none"/></svg>
<div class="t" style="left:1296px;top:650.84px;font-size:12px;color:#efefef;font-weight:bold;font-style:normal;transform:scaleX(0.8526);transform-origin:0 0;">Layers</div>
<div class="t" style="left:1348px;top:650.84px;font-size:12px;color:#bababa;font-weight:bold;font-style:normal;transform:scaleX(0.8886);transform-origin:0 0;">Channels</div>
<div class="t" style="left:1415px;top:650.84px;font-size:12px;color:#bababa;font-weight:bold;font-style:normal;transform:scaleX(0.8566);transform-origin:0 0;">Paths</div>
<div class="a" style="left:1338px;top:643px;width:1px;height:31px;background:#3f3f3f;"></div>
<div class="a" style="left:1404px;top:643px;width:1px;height:31px;background:#3f3f3f;"></div>
<div class="a" style="left:1453px;top:643px;width:1px;height:31px;background:#3f3f3f;"></div>
<svg class="a" style="left:1584px;top:654px;" width="13" height="10" viewBox="0 0 13 10"><path d="M0,1 H13 M0,3.7 H13 M0,6.4 H13 M0,9.1 H13" stroke="#c8c8c8" stroke-width="1.3"/></svg>
<div class="a" style="left:1291px;top:684px;width:94px;height:23px;background:#4c4c4c;border:1px dotted #555"></div>
<svg class="a" style="left:1298px;top:690px;" width="13" height="13" viewBox="0 0 13 13"><circle cx="5.3" cy="5.3" r="4.2" stroke="#9a9a9a" stroke-width="1.4" fill="none"/><path d="M8.3,8.3 L12.3,12.3" stroke="#9a9a9a" stroke-width="1.7"/></svg>
<div class="t" style="left:1315px;top:689.34px;font-size:12px;color:#8c8c8c;font-weight:normal;font-style:normal;transform:scaleX(0.8322);transform-origin:0 0;">Kind</div>
<svg class="a" style="left:1374px;top:696px;" width="7" height="4" viewBox="0 0 7 4"><path d="M0.6,0.6 L3.5,3.4 L6.4,0.6" stroke="#777" stroke-width="1.1" fill="none"/></svg>
<svg class="a" style="left:1400px;top:688px;" width="15" height="12" viewBox="0 0 15 12"><rect x="0.7" y="0.7" width="13.6" height="10.6" stroke="#9e9e9e" stroke-width="1.3" fill="none"/><path d="M2.5,9.5 L5.5,5 L8,8 L10,6 L12.5,9.5 Z" fill="#9e9e9e"/></svg>
<svg class="a" style="left:1426px;top:687px;" width="13" height="13" viewBox="0 0 13 13"><circle cx="6.5" cy="6.5" r="5.6" stroke="#9e9e9e" stroke-width="1.4" fill="none"/><path d="M10.5,2.5 A5.6,5.6 0 0 1 2.5,10.5 Z" fill="#9e9e9e"/></svg>
<svg class="a" style="left:1453px;top:687px;" width="14" height="14" viewBox="0 0 14 14"><path d="M0.5,0.5 H13.5 V4 H12.5 L12,2 H8 V12 L10,12.6 V13.5 H4 V12.6 L6,12 V2 H2 L1.5,4 H0.5 Z" fill="#9e9e9e"/></svg>
<svg class="a" style="left:1480px;top:687px;" width="15" height="15" viewBox="0 0 15 15"><rect x="2.5" y="2.5" width="10" height="10" stroke="#9e9e9e" stroke-width="1.3" fill="none"/><rect x="0.5" y="0.5" width="4" height="4" fill="#9e9e9e"/><rect x="10.5" y="0.5" width="4" height="4" fill="#9e9e9e"/><rect x="0.5" y="10.5" width="4" height="4" fill="#9e9e9e"/><rect x="10.5" y="10.5" width="4" height="4" fill="#9e9e9e"/></svg>
<svg class="a" style="left:1507px;top:687px;" width="14" height="15" viewBox="0 0 14 15"><path d="M4,0.7 H9.5 L13.3,4.5 V13.5 H4 Z" stroke="#9e9e9e" stroke-width="1.3" fill="none"/><rect x="0.5" y="7" width="7" height="7.5" fill="#9e9e9e"/></svg>
<svg class="a" style="left:1532px;top:684px;" width="12" height="20" viewBox="0 0 12 20"><rect x="1" y="1" width="10" height="18" rx="5" fill="#4a4a4a"/><circle cx="6" cy="6" r="5" fill="#9a9a9a"/></svg>
<div class="a" style="left:1286px;top:709px;width:314px;height:2px;background:#464646;"></div>
<div class="a" style="left:1291px;top:715px;width:145px;height:23px;background:#4c4c4c;border:1px dotted #555"></div>
<div class="t" style="left:1299px;top:720.34px;font-size:12px;color:#8c8c8c;font-weight:normal;font-style:normal;transform:scaleX(0.9309);transform-origin:0 0;">Normal</div>
<svg class="a" style="left:1424px;top:727px;" width="7" height="4" viewBox="0 0 7 4"><path d="M0.6,0.6 L3.5,3.4 L6.4,0.6" stroke="#777" stroke-width="1.1" fill="none"/></svg>
<div class="t" style="left:1445px;top:719.84px;font-size:12px;color:#8c8c8c;font-weight:normal;font-style:normal;transform:scaleX(0.9315);transform-origin:0 0;">Opacity:</div>
<div class="a" style="left:1492px;top:717px;width:33px;height:18px;background:#464646;border:1px dotted #525252"></div>
<div class="t" style="left:1494px;top:720.84px;font-size:12px;color:#7a7a7a;font-weight:normal;font-style:normal;transform:scaleX(0.9445);transform-origin:0 0;">100%</div>
<div class="a" style="left:1526px;top:717px;width:15px;height:18px;background:#4b4b4b;border:1px dotted #555"></div>
<svg class="a" style="left:1530px;top:725px;" width="7" height="4" viewBox="0 0 7 4"><path d="M0.6,0.6 L3.5,3.4 L6.4,0.6" stroke="#666" stroke-width="1.1" fill="none"/></svg>
<div class="a" style="left:1286px;top:740px;width:314px;height:2px;background:#464646;"></div>
<div class="t" style="left:1292px;top:750.34px;font-size:12px;color:#8c8c8c;font-weight:normal;font-style:normal;transform:scaleX(0.9621);transform-origin:0 0;">Lock:</div>
<svg class="a" style="left:1329px;top:750px;" width="13" height="13" viewBox="0 0 13 13"><rect x="0.6" y="0.6" width="11.8" height="11.8" stroke="#9e9e9e" stroke-width="1.2" fill="none"/><rect x="1" y="1" width="3.7" height="3.7" fill="#9e9e9e"/><rect x="8.4" y="1" width="3.7" height="3.7" fill="#9e9e9e"/><rect x="4.7" y="4.7" width="3.7" height="3.7" fill="#9e9e9e"/><rect x="1" y="8.4" width="3.7" height="3.7" fill="#9e9e9e"/><rect x="8.4" y="8.4" width="3.7" height="3.7" fill="#9e9e9e"/></svg>
<svg class="a" style="left:1353px;top:749px;" width="15" height="15" viewBox="0 0 15 15"><path d="M14.5,0.5 L7,8.5 L8.8,10 Z" fill="#9e9e9e"/><path d="M6,9.5 Q3,9.5 2.8,12 Q2.5,14 0.5,14.5 Q5.5,15.5 7.8,11 Z" fill="#9e9e9e"/></svg>
<svg class="a" style="left:1376px;top:749px;" width="16" height="16" viewBox="0 0 16 16"><path d="M8,1 V15 M1,8 H15" stroke="#9e9e9e" stroke-width="1.4"/><path d="M8,0 L5.5,3 H10.5 Z M8,16 L5.5,13 H10.5 Z M0,8 L3,5.5 V10.5 Z M16,8 L13,5.5 V10.5 Z" fill="#9e9e9e"/></svg>
<svg class="a" style="left:1401px;top:748px;" width="17" height="16" viewBox="0 0 17 16"><path d="M3,0 V13 H16 M0,3 H13 V16" stroke="#9e9e9e" stroke-width="1.4" fill="none"/><path d="M6,3 L13,10" stroke="#9e9e9e" stroke-width="1.2"/></svg>
<svg class="a" style="left:1427px;top:748px;" width="13" height="16" viewBox="0 0 13 16"><path d="M3.5,7 V4.5 Q3.5,1 6.5,1 Q9.5,1 9.5,4.5 V7" stroke="#9e9e9e" stroke-width="1.6" fill="none"/><rect x="1" y="7" width="11" height="8" fill="#9e9e9e"/><circle cx="6.5" cy="11" r="1.3" fill="#4f4f4f"/></svg>
<div class="t" style="left:1470px;top:750.34px;font-size:12px;color:#8c8c8c;font-weight:normal;font-style:normal;transform:scaleX(0.8569);transform-origin:0 0;">Fill:</div>
<div class="a" style="left:1492px;top:749px;width:33px;height:17px;background:#464646;border:1px dotted #525252"></div>
<div class="t" style="left:1494px;top:751.84px;font-size:12px;color:#7a7a7a;font-weight:normal;font-style:normal;transform:scaleX(0.9445);transform-origin:0 0;">100%</div>
<div class="a" style="left:1526px;top:749px;width:15px;height:17px;background:#4b4b4b;border:1px dotted #555"></div>
<svg class="a" style="left:1530px;top:756px;" width="7" height="4" viewBox="0 0 7 4"><path d="M0.6,0.6 L3.5,3.4 L6.4,0.6" stroke="#666" stroke-width="1.1" fill="none"/></svg>
<div class="a" style="left:1286px;top:774px;width:34px;height:45px;background:#4f4f4f;"></div>
<div class="a" style="left:1320px;top:774px;width:264px;height:45px;background:#686868;"></div>
<div class="a" style="left:1584px;top:774px;width:16px;height:223px;background:#4a4a4a;"></div>
<svg class="a" style="left:1295px;top:792px;" width="16" height="11" viewBox="0 0 16 11"><path d="M0.8,5.5 Q8,-2 15.2,5.5 Q8,13 0.8,5.5 Z" fill="#e8e8e8"/><circle cx="8" cy="5.5" r="2.6" fill="#4f4f4f"/><circle cx="8.8" cy="4.8" r="0.9" fill="#e8e8e8"/></svg>
<div class="a" style="left:1325px;top:780px;width:34px;height:35px;background:#e8e8e8;border:1px solid #3a3a3a"></div>
<svg class="a" style="left:1326px;top:781px;" width="32" height="33" viewBox="85 20 1060 1090"><rect x="0" y="0" width="2000" height="2000" fill="#e8e8e8"/><use href="#fig"/></svg>
<div class="t" style="left:1370px;top:790.34px;font-size:12px;color:#f0f0f0;font-weight:normal;font-style:italic;transform:scaleX(0.9212);transform-origin:0 0;">Background</div>
<svg class="a" style="left:1554px;top:788px;" width="13" height="17" viewBox="0 0 13 17"><path d="M3.5,7.5 V5 Q3.5,1.2 6.5,1.2 Q9.5,1.2 9.5,5 V7.5" stroke="#e4e4e4" stroke-width="1.4" fill="none"/><rect x="1" y="7.5" width="11" height="8.5" stroke="#e4e4e4" stroke-width="1.4" fill="none"/><rect x="5.5" y="10.5" width="2" height="2.5" fill="#e4e4e4"/></svg>
<div class="a" style="left:1286px;top:997px;width:314px;height:1px;background:#3c3c3c;"></div>
<div class="a" style="left:1286px;top:998px;width:314px;height:14px;background:#535353;"></div>
<svg class="a" style="left:1374px;top:1003px;" width="20" height="11" viewBox="0 0 20 11"><rect x="1" y="2" width="8" height="7" rx="3.5" stroke="#8e8e8e" stroke-width="1.4" fill="none"/><rect x="11" y="2" width="8" height="7" rx="3.5" stroke="#8e8e8e" stroke-width="1.4" fill="none"/><path d="M6,5.5 H14" stroke="#8e8e8e" stroke-width="1.4"/></svg>
<div class="t" style="left:1407px;top:1003.84px;font-size:12px;color:#8e8e8e;font-weight:normal;font-style:italic;transform:scaleX(1.2843);transform-origin:0 0;">fx</div>
<svg class="a" style="left:1437px;top:1003px;" width="15" height="11" viewBox="0 0 15 11"><rect x="0" y="0" width="15" height="11" fill="#8e8e8e"/><circle cx="7.5" cy="6" r="3.5" fill="#535353"/></svg>
<svg class="a" style="left:1467px;top:1003px;" width="13" height="11" viewBox="0 0 13 11"><circle cx="6.5" cy="6.5" r="5.6" stroke="#8e8e8e" stroke-width="1.4" fill="none"/><path d="M10.5,2.5 A5.6,5.6 0 0 1 2.5,10.5 Z" fill="#8e8e8e"/></svg>
<svg class="a" style="left:1497px;top:1003px;" width="17" height="11" viewBox="0 0 17 11"><path d="M0,2 H6 L8,4 H17 V11 H0 Z" fill="#8e8e8e"/></svg>
<svg class="a" style="left:1527px;top:1002px;" width="13" height="12" viewBox="0 0 13 12"><rect x="0.7" y="0.7" width="11.6" height="11" stroke="#8e8e8e" stroke-width="1.3" fill="none"/><path d="M6.5,3 V10 M3,6.5 H10" stroke="#8e8e8e" stroke-width="1.4"/></svg>
<svg class="a" style="left:1558px;top:1002px;" width="11" height="12" viewBox="0 0 11 12"><path d="M0,2 H11 M4,2 V0.5 H7 V2 M1.5,3.5 H9.5 V12 H1.5 Z" stroke="#8e8e8e" stroke-width="1.2" fill="none"/></svg>
<div class="a" style="left:400px;top:955px;width:462px;height:38px;background:#535353;border-radius:4px;box-shadow:0 1px 3px rgba(0,0,0,0.35)"></div>
<svg class="a" style="left:403px;top:959px;" width="7" height="30" viewBox="0 0 7 30"><path d="M3.5,0 V30" stroke="#e0e0e0" stroke-width="5" stroke-dasharray="2.2 1.8"/></svg>
<div class="a" style="left:419px;top:958px;width:134px;height:31px;background:#4d4d4d;border:1px solid #626262;border-radius:3px"></div>
<svg class="a" style="left:431px;top:965px;" width="16" height="16" viewBox="0 0 16 16"><circle cx="8" cy="5.5" r="3.5" fill="#dcdcdc"/><path d="M2,15 Q2,9.5 8,9.5 Q14,9.5 14,15 Z" fill="#dcdcdc"/><path d="M8,0.5 A7.5,7.5 0 0 1 15.5,8" stroke="#dcdcdc" stroke-dasharray="1 1.3" fill="none"/><path d="M0.5,8 A7.5,7.5 0 0 1 8,0.5" stroke="#dcdcdc" stroke-dasharray="1 1.3" fill="none"/></svg>
<div class="t" style="left:452px;top:966.15px;font-size:14px;color:#eaeaea;font-weight:normal;font-style:normal;transform:scaleX(0.9590);transform-origin:0 0;">Select subject</div>
<div class="a" style="left:559px;top:958px;width:174px;height:31px;background:#4d4d4d;border:1px solid #626262;border-radius:3px"></div>
<svg class="a" style="left:570px;top:964px;" width="19" height="16" viewBox="0 0 19 16"><rect x="0.7" y="0.7" width="17.6" height="14.6" stroke="#dcdcdc" stroke-width="1.3" fill="none"/><path d="M2,3 H7 V6 H2 Z M12,3 H17 V6 H12 Z M7,6 H12 V9 H7 Z" fill="#dcdcdc"/><path d="M2,14 L7,8 L10,11 L13,9 L17,14 Z" fill="#dcdcdc"/></svg>
<div class="t" style="left:595.6px;top:966.15px;font-size:14px;color:#eaeaea;font-weight:normal;font-style:normal;transform:scaleX(0.9397);transform-origin:0 0;">Remove background</div>
<svg class="a" style="left:749px;top:964px;" width="16" height="17" viewBox="0 0 16 17"><path d="M2,2 L12,4 L14,15 L3,14 Z" stroke="#cfcfcf" stroke-width="1.3" fill="none"/><rect x="0.5" y="0.5" width="3" height="3" fill="#cfcfcf"/><rect x="12.5" y="13.5" width="3" height="3" fill="#cfcfcf"/></svg>
<svg class="a" style="left:790px;top:964px;" width="17" height="17" viewBox="0 0 17 17"><circle cx="8.5" cy="8.5" r="7.2" stroke="#e6e6e6" stroke-width="1.6" fill="none"/><path d="M13.6,3.4 A7.2,7.2 0 0 1 3.4,13.6 Z" fill="#e6e6e6"/></svg>
<svg class="a" style="left:833px;top:971px;" width="17" height="5" viewBox="0 0 17 5"><circle cx="2.5" cy="2.5" r="1.8" fill="#e6e6e6"/><circle cx="8.5" cy="2.5" r="1.8" fill="#e6e6e6"/><circle cx="14.5" cy="2.5" r="1.8" fill="#e6e6e6"/></svg>
</body></html>
